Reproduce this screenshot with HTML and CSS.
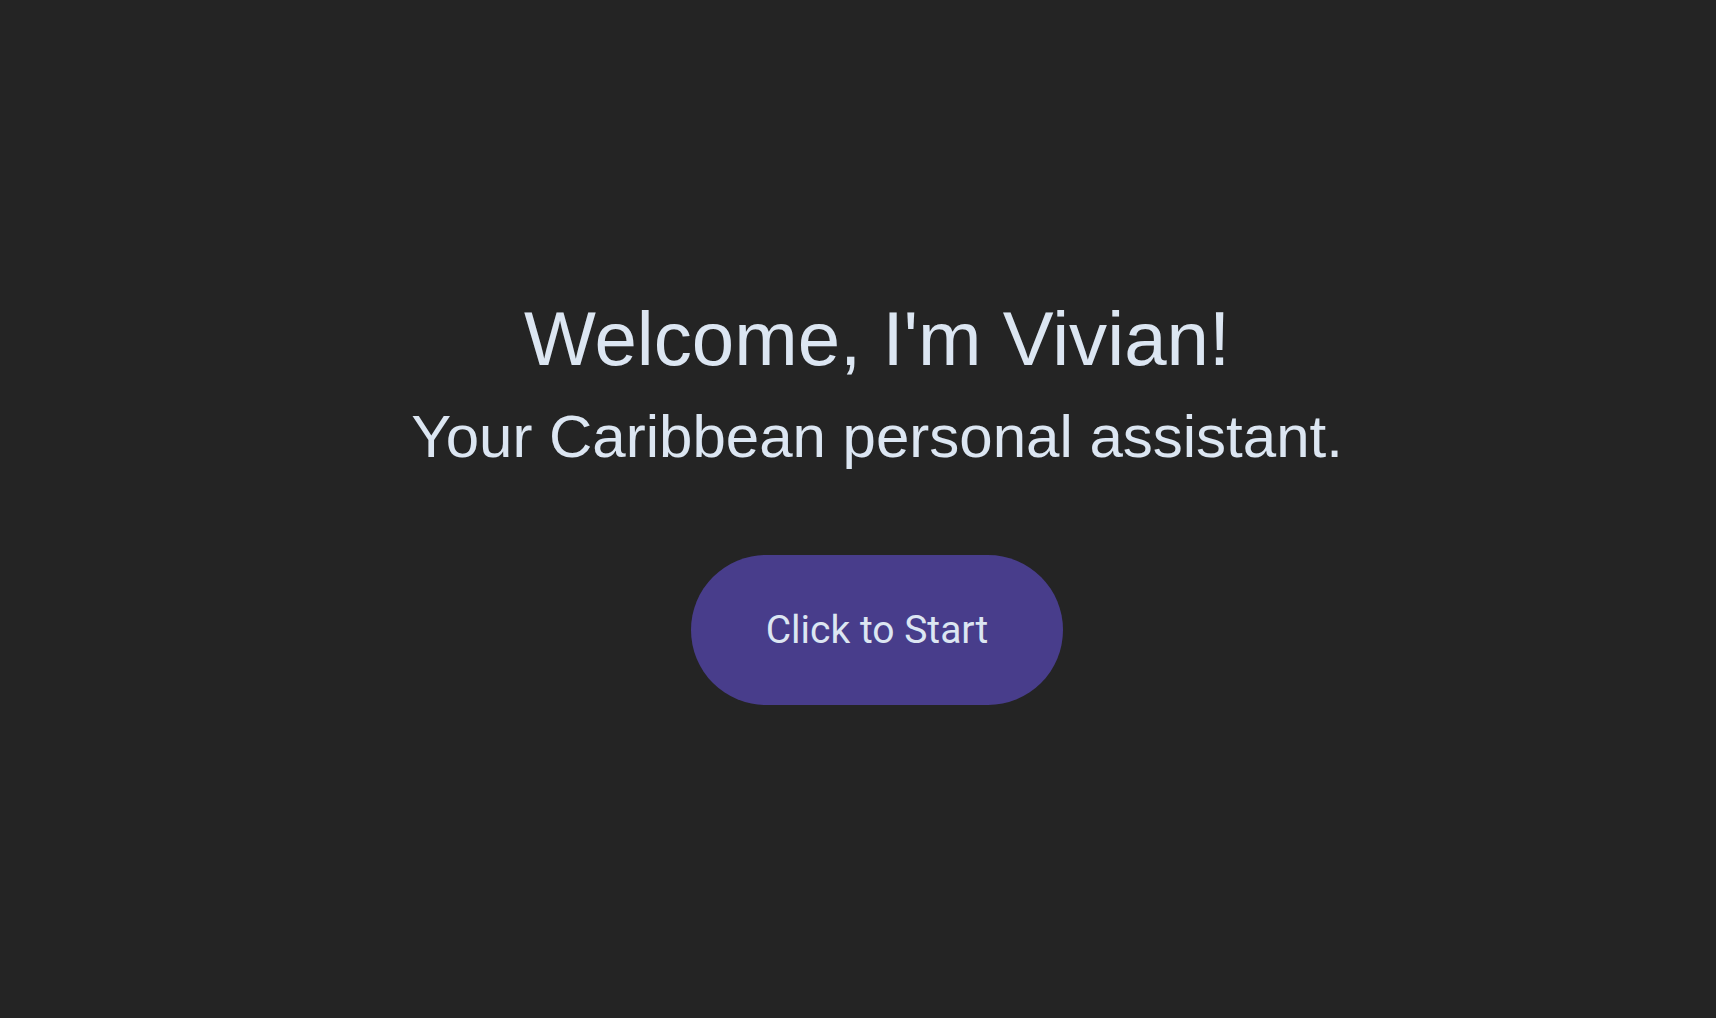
FILE: index.html
```html
<!DOCTYPE html>
<html lang="en">
<head>
<meta charset="utf-8">
<title>Vivian</title>
<link rel="stylesheet" href="styles.css">
</head>
<body>
<main class="welcome">
  <h1 class="title">Welcome, I'm Vivian!</h1>
  <p class="subtitle">Your Caribbean personal assistant.</p>
  <button class="start-btn" type="button">Click to Start</button>
</main>
</body>
</html>
```

FILE: styles.css
```css
html, body {
  margin: 0;
  padding: 0;
  background: #242424;
}

body {
  min-height: 100vh;
  color: #dce6f2;
  font-family: "Liberation Sans", Arial, sans-serif;
}

.welcome {
  min-height: 100vh;
  box-sizing: border-box;
  display: flex;
  flex-direction: column;
  align-items: center;
  justify-content: center;
  padding: 0 0 20px 38px;
}

.title {
  margin: 0;
  font-size: 76.2px;
  font-weight: 400;
  line-height: 1.2;
}

.subtitle {
  margin: 17px 0 0;
  font-size: 60px;
  line-height: 1.2;
}

.start-btn {
  margin-top: 82px;
  width: 372px;
  height: 150px;
  border: none;
  border-radius: 75px;
  background: #483d8b;
  color: #dce6f2;
  font-family: Roboto, "Noto Sans", sans-serif;
  font-size: 39px;
  font-weight: 400;
  padding: 0;
  cursor: pointer;
}
```
